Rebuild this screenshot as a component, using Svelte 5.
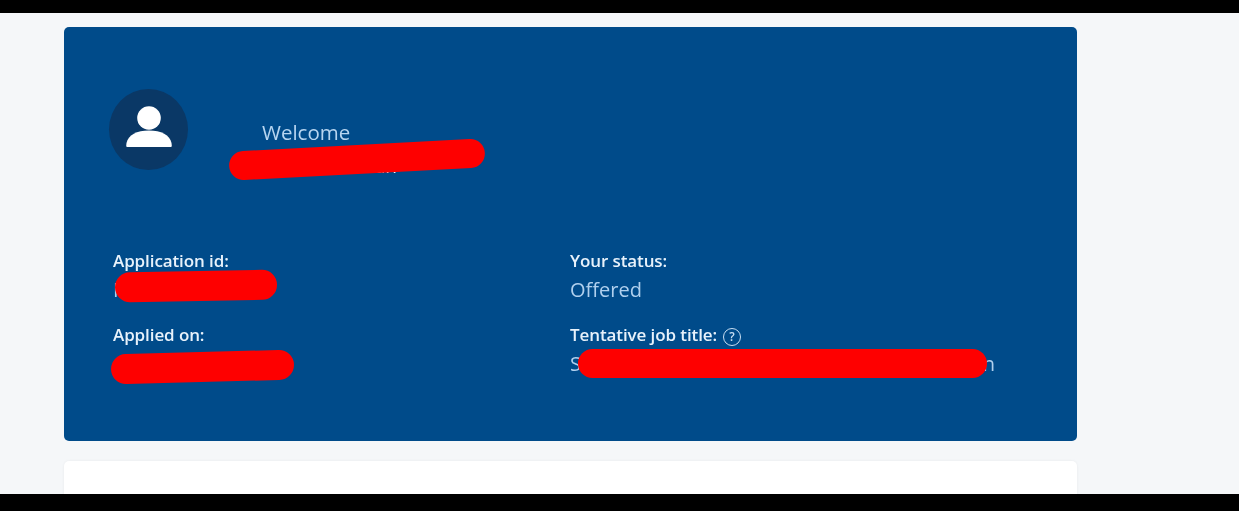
<script lang="ts">
  const scribbles = ["s-name", "s-id", "s-date", "s-job"];
</script>

<div class="screen">
  <div class="letterbox top"></div>
  <main class="page">
    <section class="hero">
      <header class="user">
        <div class="avatar">
          <svg viewBox="0 0 46 42" width="46" height="42" aria-hidden="true">
            <circle cx="23" cy="12" r="11.8" fill="#fff" />
            <path d="M.5 37C2 29 11 24.5 23 24.5S44 29 45.5 37c.4 2.500.4 4-.5 4H1c-.9 0-.9-1.500-.5-4z" fill="#fff" />
          </svg>
        </div>
        <div class="greeting">
          <span class="welcome">Welcome</span>
          <span class="name"><span>j</span><span>wan</span></span>
        </div>
      </header>

      <div class="details">
        <div class="field">
          <span class="label">Application id:</span>
          <span class="value">I</span>
        </div>
        <div class="field">
          <span class="label">Your status:</span>
          <span class="value">Offered</span>
        </div>
        <div class="field">
          <span class="label">Applied on:</span>
          <span class="value">&nbsp;</span>
        </div>
        <div class="field">
          <span class="label">Tentative job title:<span class="help">?</span></span>
          <span class="value job"><span>S</span><span>n</span></span>
        </div>
      </div>
    </section>
    <section class="panel"></section>
  </main>
  <div class="letterbox bottom"></div>

  <!-- red strokes painted over the private values -->
  {#each scribbles as s}
    <div class="scribble {s}"></div>
  {/each}
</div>

<style>
  :global(body) {
    margin: 0;
    background: #000;
  }

  .screen {
    position: relative;
    display: flex;
    flex-direction: column;
    height: 511px;
    overflow: hidden;
    font-family: "Open Sans", sans-serif;
  }

  .letterbox {
    background: #000;
    flex-shrink: 0;
  }
  .top { height: 13px; }
  .bottom { height: 17px; }

  /* the reference is a soft, re-encoded capture */
  .page {
    flex: 1;
    min-height: 0;
    overflow: hidden;
    background: #f5f7f9;
    padding: 14px 162px 0 64px;
    filter: blur(0.5px);
  }

  .hero {
    height: 414px;
    box-sizing: border-box;
    padding: 62px 49px 0 45px;
    background: #004b8a;
    border-radius: 5px;
  }

  .panel {
    height: 60px;
    margin-top: 20px;
    background: #fff;
    border-radius: 5px;
    box-shadow: 0 0 3px rgba(0, 0, 0, 0.06);
  }

  .user {
    display: flex;
    gap: 74px;
    height: 81px;
  }

  .avatar {
    width: 79px;
    height: 81px;
    border-radius: 50%;
    background: #0a3866;
    display: flex;
    justify-content: center;
    padding-top: 17px;
    box-sizing: border-box;
  }

  .greeting {
    display: flex;
    flex-direction: column;
    padding-top: 30px;
  }

  .welcome {
    font-size: 20.5px;
    line-height: 26px;
    color: #b7d5f0;
  }

  .name {
    display: flex;
    justify-content: space-between;
    width: 135px;
    margin-top: 8px;
    font-size: 19px;
    line-height: 26px;
    color: #fff;
  }

  .details {
    display: grid;
    grid-template-columns: 457px 1fr;
    row-gap: 20px;
    margin: 80px 0 0 4px;
  }

  .field {
    display: flex;
    flex-direction: column;
    gap: 4px;
  }

  .label {
    display: flex;
    align-items: center;
    gap: 6px;
    height: 22px;
    font-size: 17px;
    font-weight: 600;
    letter-spacing: -0.1px;
    line-height: 22px;
    white-space: pre;
    color: #e8f2fb;
  }

  .help {
    width: 16px;
    height: 16px;
    margin-top: 4px;
    border: 1.5px solid #c9dff3;
    border-radius: 50%;
    font-size: 12px;
    letter-spacing: 0;
    line-height: 16px;
    text-align: center;
    color: #c9dff3;
  }

  .value {
    height: 28px;
    font-size: 20px;
    line-height: 28px;
    color: #b0d0ee;
  }

  .job {
    display: flex;
    justify-content: space-between;
    width: 425px;
  }

  .scribble {
    position: absolute;
    background: #fe0000;
    border-radius: 15px;
  }

  .s-name {
    left: 229px;
    top: 145px;
    width: 256px;
    height: 29px;
    transform: rotate(-3deg);
  }
  .s-id {
    left: 115px;
    top: 271px;
    width: 162px;
    height: 30px;
    transform: rotate(-1deg);
  }
  .s-date {
    left: 111px;
    top: 352px;
    width: 183px;
    height: 30px;
    transform: rotate(-1.5deg);
  }
  .s-job {
    left: 578px;
    top: 349px;
    width: 409px;
    height: 29px;
  }
</style>
